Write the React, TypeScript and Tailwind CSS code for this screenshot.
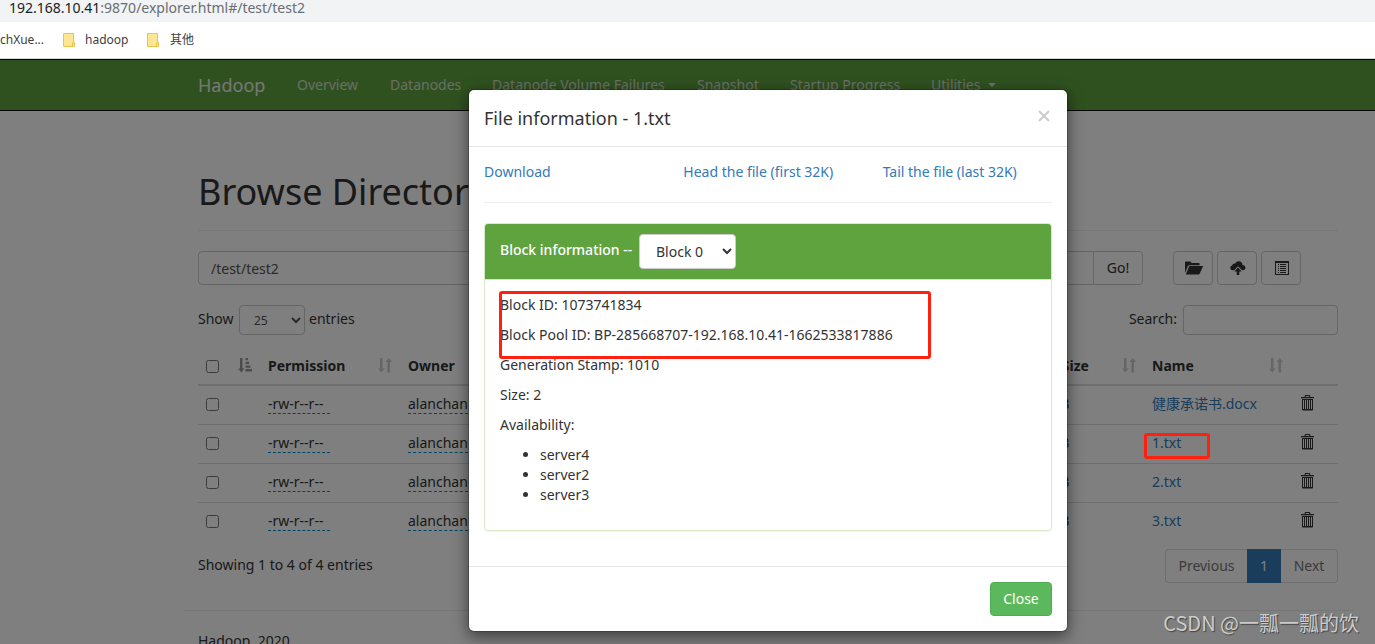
import { useState } from "react";
import type { ReactNode } from "react";

const navItems = [
	{ label: "Overview", width: "w-[93px]" },
	{ label: "Datanodes", width: "w-[102px]" },
	{ label: "Datanode Volume Failures", width: "w-[205px]" },
	{ label: "Snapshot", width: "w-[93px]" },
	{ label: "Startup Progress", width: "w-[141px]" },
];

const files = [
	{ name: "健康承诺书.docx" },
	{ name: "1.txt" },
	{ name: "2.txt" },
	{ name: "3.txt" },
];

const blockInfo = [
	"Block ID: 1073741834",
	"Block Pool ID: BP-285668707-192.168.10.41-1662533817886",
	"Generation Stamp: 1010",
	"Size: 2",
	"Availability:",
];

const servers = ["server4", "server2", "server3"];

function BookmarkFolder() {
	return (
		<svg width="13" height="14" viewBox="0 0 13 14" aria-hidden="true">
			<path
				d="M.5.5h10v9h1v4H.5z"
				fill="#ffe695"
				stroke="#e9c34c"
				strokeWidth="1"
			/>
			<path d="M9.5 13v-3h1" fill="none" stroke="#e9c34c" />
		</svg>
	);
}

function FolderOpenIcon() {
	return (
		<svg width="18" height="14" viewBox="0 0 18 14" fill="currentColor" aria-hidden="true">
			<path d="M0 12V1.6C0 1 .4.5 1 .5h4.2c.5 0 .8.3.9.7l.3.8h7.2c.6 0 1 .4 1 1v1.2H4.2c-.6 0-1 .3-1.2.8z" />
			<path d="M4.3 5h13.2c.4 0 .6.3.4.7l-3.3 7.1c-.2.4-.5.7-1 .7H.8z" />
		</svg>
	);
}

function CloudUploadIcon() {
	return (
		<svg width="16" height="14" viewBox="0 0 16 14" fill="currentColor" aria-hidden="true">
			<path d="M3.1 9.3C1.5 9.3.3 8.2.3 6.9c0-1.2.9-2.1 2-2.3C2.3 3.3 3.3 2.4 4.5 2.4c.3 0 .6 0 .8.1C5.9 1.1 7.2.2 8.7.2c2.1 0 3.8 1.7 3.8 3.7v.2c1.7 0 3 1.2 3 2.7 0 1.4-1.1 2.5-2.5 2.5h-1.1L8 5.3 4.2 9.3z" />
			<path d="M8 6.5l3.6 4H9.3V14H6.7v-3.5H4.4z" />
		</svg>
	);
}

function ListAltIcon() {
	return (
		<svg width="14" height="14" viewBox="0 0 14 14" fill="currentColor" aria-hidden="true">
			<path fillRule="evenodd" d="M0 0h14v14H0zM1 2v11h12V2z" />
			<path d="M3 3h1v1H3zM5 3h6v1H5zM3 5h1v1H3zM5 5h6v1H5zM3 7h1v1H3zM5 7h6v1H5zM3 9h1v1H3zM5 9h6v1H5zM3 11h1v1H3zM5 11h6v1H5z" />
		</svg>
	);
}

function TrashIcon() {
	return (
		<svg width="13" height="16" viewBox="0 0 13 16" fill="currentColor" aria-hidden="true">
			<path d="M0 2h3.7V.9c0-.5.4-.9.9-.9h3.8c.5 0 .9.4.9.9V2H13v1.300H0zM4.800 1.100V2h3.400v-.9z" />
			<path
				fillRule="evenodd"
				d="M1 4h11v10.800c0 .4-.3.700-.7.700H1.700c-.4 0-.7-.3-.7-.7zM2 5v9h1V5zM4 5v9h1V5zM6 5v9h1V5zM8 5v9h1V5zM10 5v9h1V5z"
			/>
		</svg>
	);
}

function SortIcon() {
	return (
		<svg width="14" height="15" viewBox="0 0 14 15" fill="currentColor" aria-hidden="true">
			<path d="M2 0h2.500v10.500h2L3.300 14.500.1 10.500H2z" />
			<path d="M9.500 14.500H12V4h2L10.700 0 7.500 4h2z" />
		</svg>
	);
}

function SortAscIcon() {
	return (
		<svg width="14" height="15" viewBox="0 0 14 15" fill="currentColor" aria-hidden="true">
			<path d="M2 0h2.500v10.500h2L3.300 14.500.1 10.500H2z" />
			<path d="M7.500 0h2.500v2.300H7.500zM7.500 3.700H11v2.300H7.500zM7.500 7.400h5v2.300h-5zM7.500 11.100H14v2.400H7.500z" />
		</svg>
	);
}

function ToolButton({ label, children }: { label: string; children: ReactNode }) {
	return (
		<button
			type="button"
			aria-label={label}
			className="flex h-[34px] w-10 items-center justify-center rounded border border-[#ccc] bg-white pl-[2px]"
		>
			{children}
		</button>
	);
}

function HeaderCell({ label, children }: { label?: string; children: ReactNode }) {
	return (
		<th className="px-2 pt-2 pb-2 text-left font-bold">
			<div className="flex h-5 items-center justify-between whitespace-nowrap">
				<span>{label}</span>
				<span className="pb-[2px] text-[#ccc]">{children}</span>
			</div>
		</th>
	);
}

function BrowserBar() {
	return (
		<div className="shrink-0 border-b border-[#d5d5d5] bg-white">
			<div className="h-[22px] bg-[#f1f3f4] pl-[9px] text-sm leading-4 text-[#6a6e73]">
				<span className="text-[#202124]">192.168.10.41</span>
				:9870/explorer.html#/test/test2
			</div>
			<div className="flex h-9 items-center text-xs text-[#3c4043]">
				<span className="w-[63px]">chXue...</span>
				<BookmarkFolder />
				<span className="ml-[9px] w-[53px]">hadoop</span>
				<span className="ml-[9px]">
					<BookmarkFolder />
				</span>
				<span className="ml-[10px]">其他</span>
			</div>
		</div>
	);
}

function Navbar() {
	return (
		<nav className="border-y border-[#080808] bg-[#5fa33e]">
			<div className="mr-[22px] ml-[183px] flex h-[50px] items-center whitespace-nowrap text-[#d3dccf]">
				<a href="#" className="w-[99px] pl-[15px] text-lg text-[#eee]">
					Hadoop
				</a>
				{navItems.map((item) => (
					<a key={item.label} href="#" className={`pl-[15px] ${item.width}`}>
						{item.label}
					</a>
				))}
				<a href="#" className="flex items-center gap-2 pl-[15px]">
					Utilities
					<svg width="8" height="4" viewBox="0 0 8 4" fill="currentColor" aria-hidden="true">
						<path d="M0 0h8L4 4z" />
					</svg>
				</a>
			</div>
		</nav>
	);
}

function FileTable() {
	return (
		<table className="mt-[13px] w-full table-fixed border-collapse">
			<colgroup>
				<col className="w-[62px]" />
				<col className="w-[140px]" />
				<col />
				<col className="w-[132px]" />
				<col className="w-[147px]" />
				<col className="w-[47px]" />
			</colgroup>
			<thead>
				<tr className="border-b-2 border-[#ddd]">
					<th className="px-2 py-2">
						<div className="flex h-5 items-center justify-between">
							<input type="checkbox" aria-label="Select all" className="h-[13px] w-[13px]" />
							<span className="pb-[2px] text-[#999]">
								<SortAscIcon />
							</span>
						</div>
					</th>
					<HeaderCell label="Permission">
						<SortIcon />
					</HeaderCell>
					<HeaderCell label="Owner">
						<SortIcon />
					</HeaderCell>
					<HeaderCell label="Block Size">
						<SortIcon />
					</HeaderCell>
					<HeaderCell label="Name">
						<SortIcon />
					</HeaderCell>
					<th />
				</tr>
			</thead>
			<tbody>
				{files.map((file) => (
					<tr key={file.name} className="h-[39px] border-t border-[#ddd]">
						<td className="px-2">
							<input
								type="checkbox"
								aria-label={`Select ${file.name}`}
								className="block h-[13px] w-[13px]"
							/>
						</td>
						<td className="px-2 pb-[2px]">
							<span className="inline-block w-[62px] border-b border-dashed border-[#08c] leading-[19px]">
								-rw-r--r--
							</span>
						</td>
						<td className="px-2 pb-[2px]">
							<span className="inline-block border-b border-dashed border-[#08c] leading-[19px]">
								alanchan
							</span>
						</td>
						<td className="px-2 pb-[2px]">128 MB</td>
						<td className="px-2 pb-[2px] whitespace-nowrap">
							<a href="#" className="text-[#337ab7]">
								{file.name}
							</a>
						</td>
						<td className="px-[10px] pb-1">
							<button type="button" aria-label={`Delete ${file.name}`} className="block">
								<TrashIcon />
							</button>
						</td>
					</tr>
				))}
			</tbody>
		</table>
	);
}

function Explorer() {
	return (
		<main className="mr-[22px] ml-[183px]">
			<div className="px-[15px]">
				<h1 className="border-b border-[#eee] pt-[61px] pb-[18px] text-4xl leading-[40px]">
					Browse Directory
				</h1>
				<div className="mt-5 flex">
					<input
						type="text"
						aria-label="Directory"
						defaultValue="/test/test2"
						className="h-[34px] min-w-0 flex-1 rounded-l border border-[#ccc] bg-white px-3 text-[#555]"
					/>
					<button
						type="button"
						className="-ml-px h-[34px] w-[50px] rounded-r border border-[#ccc] bg-white"
					>
						Go!
					</button>
					<div className="mr-[37px] ml-[30px] flex gap-1">
						<ToolButton label="Create directory">
							<FolderOpenIcon />
						</ToolButton>
						<ToolButton label="Upload files">
							<CloudUploadIcon />
						</ToolButton>
						<ToolButton label="Cut and paste">
							<ListAltIcon />
						</ToolButton>
					</div>
				</div>
				<div className="mt-5 flex items-center justify-between">
					<label className="flex items-center gap-1">
						<span className="w-[37px] pb-[2px]">Show</span>
						<select className="h-[30px] w-[66px] rounded border border-[#ccc] bg-white px-[10px] text-xs text-[#555]">
							<option>25</option>
						</select>
						<span className="pb-[2px]">entries</span>
					</label>
					<label className="flex items-center gap-[6px]">
						<span className="pb-[2px]">Search:</span>
						<input
							type="search"
							className="h-[30px] w-[155px] rounded border border-[#ccc] bg-white px-2"
						/>
					</label>
				</div>
				<FileTable />
				<div className="mt-2 flex items-center justify-between">
					<span className="pb-[2px]">Showing 1 to 4 of 4 entries</span>
					<div className="flex h-[34px] text-[#777]">
						<button type="button" className="w-[82px] rounded-l border border-r-0 border-[#ddd] bg-white">
							Previous
						</button>
						<button type="button" className="w-[34px] bg-[#337ab7] text-white">
							1
						</button>
						<button type="button" className="w-[57px] rounded-r border border-l-0 border-[#ddd] bg-white">
							Next
						</button>
					</div>
				</div>
			</div>
			<footer className="mt-[27px] border-t border-[#eee] px-[15px] pt-5">Hadoop, 2020.</footer>
		</main>
	);
}

function FileInfoModal({ onClose }: { onClose: () => void }) {
	return (
		<div
			role="dialog"
			aria-labelledby="file-info-title"
			className="w-[600px] rounded-md border border-black/20 bg-white bg-clip-padding shadow-[0_5px_15px_rgba(0,0,0,0.5)]"
		>
			<div className="flex items-start justify-between border-b border-[#e5e5e5] p-[15px]">
				<h4 id="file-info-title" className="text-lg leading-[26px]">
					File information - 1.txt
				</h4>
				<button type="button" aria-label="Dismiss" onClick={onClose} className="px-[2px] text-[#ccc]">
					<svg width="12" height="22" viewBox="0 0 12 22" fill="none" stroke="currentColor" strokeWidth="2" aria-hidden="true">
						<path d="M1 6l10 10M11 6L1 16" />
					</svg>
				</button>
			</div>
			<div className="p-[15px]">
				<div className="-mx-[15px] grid grid-cols-3 text-[#337ab7]">
					<a href="#" className="px-[15px]">
						Download
					</a>
					<a href="#" className="px-[15px]">
						Head the file (first 32K)
					</a>
					<a href="#" className="px-[15px]">
						Tail the file (last 32K)
					</a>
				</div>
				<hr className="my-5 border-[#eee]" />
				<div className="mb-5 rounded border border-[#d6e9c6] shadow-[0_1px_1px_rgba(0,0,0,0.05)]">
					<label className="flex items-center rounded-t-[3px] border-b border-[#d6e9c6] bg-[#5fa33e] px-[15px] py-[10px] text-white">
						<span className="w-[139px] pb-1 font-medium">Block information --</span>
						<select className="h-[35px] w-[97px] rounded border border-[#ccc] bg-white px-3 text-[#333]">
							<option>Block 0</option>
						</select>
					</label>
					<div className="relative p-[15px]">
						{blockInfo.map((line) => (
							<p key={line} className="mb-[10px]">
								{line}
							</p>
						))}
						<ul className="mb-[10px] list-disc pl-10">
							{servers.map((server) => (
								<li key={server}>{server}</li>
							))}
						</ul>
						<div className="absolute top-[11px] left-[14px] h-[68px] w-[432px] rounded-[3px] border-3 border-[#ff2010]" />
					</div>
				</div>
			</div>
			<div className="border-t border-[#e5e5e5] p-[15px] text-right">
				<button
					type="button"
					onClick={onClose}
					className="h-[34px] w-[62px] rounded border border-[#4cae4c] bg-[#5cb85c] text-white"
				>
					Close
				</button>
			</div>
		</div>
	);
}

export default function App() {
	const [open, setOpen] = useState(true);

	return (
		<div className="flex h-screen flex-col overflow-hidden bg-white font-['Noto_Sans','Noto_Sans_CJK_SC',sans-serif] text-sm leading-5 text-[#333]">
			<BrowserBar />
			<div className="relative min-h-0 flex-1 overflow-hidden">
				<Navbar />
				<Explorer />
				{open && (
					<div className="absolute inset-0 flex items-start justify-center overflow-hidden bg-black/50 pt-[30px] pl-[161px]">
						<FileInfoModal onClose={() => setOpen(false)} />
					</div>
				)}
				<div className="absolute top-[374px] left-[1144px] h-[26px] w-[66px] rounded-[3px] border-3 border-[#ff2010]" />
				<div className="absolute right-4 bottom-[9px] font-['Noto_Sans_CJK_SC',sans-serif] text-xl leading-6 text-[#ccc] [text-shadow:1px_1px_1px_#444]">
					CSDN @一瓢一瓢的饮
				</div>
			</div>
		</div>
	);
}
